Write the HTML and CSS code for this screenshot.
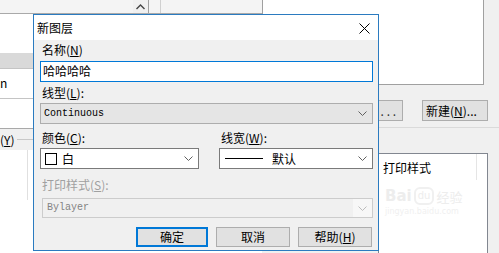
FILE: index.html
```html
<!DOCTYPE html>
<html lang="zh-CN">
<head>
<meta charset="utf-8">
<title>新图层</title>
<link rel="stylesheet" href="styles.css">
</head>
<body>
<div class="backdrop">
  <div class="left-pane">
    <div class="list-head">
      <span class="scroll-up"><svg width="9" height="6" viewBox="0 0 9 6"><path d="M0.5 5L4.5 1L8.5 5" fill="none" stroke="#444" stroke-width="1.4"/></svg></span>
      <span class="col-sep"></span>
    </div>
    <div class="list-body">
      <div class="row-gap"></div>
      <div class="row selected"></div>
      <div class="row item">n</div>
    </div>
    <div class="tab-row"><span class="tab-label">(<u>Y</u>)</span><span class="tab-line"></span></div>
    <div class="lower-list"><span class="lower-sep"></span></div>
  </div>
  <div class="right-pane">
    <div class="top-panel"></div>
    <div class="btn-row">
      <button class="bg-btn dots">. . .</button>
      <button class="bg-btn new">新建(<u>N</u>)...</button>
    </div>
    <div class="separator"></div>
    <div class="style-panel">
      <div class="style-head"><span class="style-title">打印样式</span><span class="head-sep"></span></div>
      <div class="watermark"><span class="wm-bai">Bai</span><span class="wm-paw">du</span><span class="wm-jy">经验</span></div>
      <div class="wm-url">jingyan.baidu.com</div>
    </div>
  </div>
</div>

<div class="dialog">
  <div class="title-bar">
    <span class="title">新图层</span>
    <svg class="close" width="11" height="11" viewBox="0 0 11 11"><path d="M0.5 0.5L10.5 10.5M10.5 0.5L0.5 10.5" stroke="#000" stroke-width="1"/></svg>
  </div>
  <div class="dlg-body">
    <div class="lbl m3">名称(<u>N</u>)</div>
    <div class="input">哈哈哈哈</div>
    <div class="lbl m4">线型(<u>L</u>):</div>
    <div class="combo gray"><span class="mono">Continuous</span><svg class="chev" width="9" height="5" viewBox="0 0 9 5"><path d="M0.5 0.5L4.5 4.5L8.5 0.5" fill="none" stroke="#606060"/></svg></div>
    <div class="pair">
      <div class="col">
        <div class="lbl">颜色(<u>C</u>):</div>
        <div class="combo white"><span class="swatch"></span><span class="val">白</span><svg class="chev" width="9" height="5" viewBox="0 0 9 5"><path d="M0.5 0.5L4.5 4.5L8.5 0.5" fill="none" stroke="#606060"/></svg></div>
      </div>
      <div class="col">
        <div class="lbl">线宽(<u>W</u>):</div>
        <div class="combo white"><span class="lw-line"></span><span class="val">默认</span><svg class="chev" width="9" height="5" viewBox="0 0 9 5"><path d="M0.5 0.5L4.5 4.5L8.5 0.5" fill="none" stroke="#606060"/></svg></div>
      </div>
    </div>
    <div class="lbl disabled m9">打印样式(<u>S</u>):</div>
    <div class="combo off"><span class="mono">Bylayer</span><span class="off-btn"><svg class="chev" width="9" height="5" viewBox="0 0 9 5"><path d="M0.5 0.5L4.5 4.5L8.5 0.5" fill="none" stroke="#bcbcbc"/></svg></span></div>
    <div class="btns">
      <button class="btn default">确定</button>
      <button class="btn">取消</button>
      <button class="btn">帮助(<u>H</u>)</button>
    </div>
  </div>
</div>
</body>
</html>
```

FILE: styles.css
```css
* { box-sizing: border-box; }
html, body {
  margin: 0;
  padding: 0;
}
body {
  width: 499px;
  height: 253px;
  overflow: hidden;
  position: relative;
  background: #f0f0f0;
  font-family: "Noto Sans CJK SC", "Noto Sans", sans-serif;
  font-size: 12px;
  color: #000;
}
u { text-decoration: underline; text-underline-offset: 1px; }

/* ---------- background window ---------- */
.backdrop {
  display: grid;
  grid-template-columns: 262px 237px;
  height: 253px;
}
.left-pane {
  display: flex;
  flex-direction: column;
}
.list-head {
  height: 14px;
  background: #f4f4f4;
  border-bottom: 1px solid #a9a9a9;
  display: flex;
  padding-left: 133px;
}
.scroll-up {
  width: 16px;
  height: 13px;
  background: #f0f0f0;
  border-right: 1px solid #a0a0a0;
  display: flex;
  align-items: center;
  justify-content: center;
}
.col-sep {
  width: 1px;
  height: 13px;
  margin-left: 11px;
  background: #d0d0d0;
}
.list-body {
  height: 115px;
  background: #fff;
  border-bottom: 1px solid #a9a9a9;
  display: flex;
  flex-direction: column;
}
.row-gap { height: 39px; }
.row.selected {
  height: 16px;
  background: #d9d9d9;
  border-bottom: 1px solid #c4c4c4;
}
.row.item {
  height: 30px;
  border-bottom: 1px solid #c4c4c4;
  line-height: 28px;
  padding-left: 0;
}
.tab-row {
  height: 21px;
  display: flex;
  align-items: center;
}
.tab-label { line-height: 14px; }
.tab-line {
  flex: 1;
  height: 1px;
  background: #c8c8c8;
  margin-left: 2px;
}
.lower-list {
  flex: 1;
  background: #fff;
  padding-left: 27px;
}
.lower-sep {
  display: block;
  width: 1px;
  height: 50px;
  background: #e0e0e0;
}

.right-pane {
  display: flex;
  flex-direction: column;
}
.top-panel {
  width: 222px;
  height: 85px;
  background: #fff;
  border-left: 1px solid #a0a0a0;
  border-right: 1px solid #a0a0a0;
  border-bottom: 1px solid #a0a0a0;
}
.btn-row {
  margin-top: 15px;
  height: 21px;
  display: flex;
  justify-content: flex-end;
  gap: 19px;
  padding-right: 11px;
}
.bg-btn {
  height: 21px;
  padding: 0;
  background: #e1e1e1;
  border: 1px solid #adadad;
  font-family: inherit;
  font-size: 12px;
  color: #000;
  line-height: 17px;
}
.bg-btn.dots { width: 73px; text-align: right; padding-right: 6px; color: #333; }
.bg-btn.new { width: 66px; text-align: left; padding-left: 3px; }
.separator {
  margin-top: 6px;
  height: 1px;
  background: #dadada;
}
.style-panel {
  margin-top: 25px;
  margin-left: 116px;
  width: 110px;
  flex: 1;
  background: #fff;
  border: 1px solid #828790;
  border-bottom: none;
}
.style-head {
  height: 27px;
  display: flex;
  align-items: center;
  padding-left: 4px;
}
.style-title { flex: 1; line-height: 14px; }
.head-sep {
  align-self: flex-start;
  width: 1px;
  height: 26px;
  background: #e5e5e5;
  margin-right: 10px;
}
.watermark {
  display: flex;
  align-items: flex-end;
  gap: 2px;
  padding-left: 6px;
  color: #ededed;
  height: 24px;
}
.wm-bai { font-family: "DejaVu Sans", sans-serif; font-weight: bold; font-size: 15px; line-height: 18px; }
.wm-paw { font-family: "DejaVu Sans", sans-serif; font-size: 10px; line-height: 14px; border: 2px solid #f0f0f0; border-radius: 6px; padding: 0 2px; }
.wm-jy { font-size: 13px; line-height: 16px; }
.wm-url {
  padding-left: 6px;
  font-family: "DejaVu Sans", sans-serif;
  font-size: 8px;
  color: #f0f0f0;
  line-height: 14px;
}

/* ---------- dialog ---------- */
.dialog {
  position: absolute;
  left: 33px;
  top: 14px;
  width: 346px;
  height: 237px;
  border: 1px solid #2b7bc0;
  background: #f0f0f0;
  display: flex;
  flex-direction: column;
}
.title-bar {
  height: 25px;
  background: #fff;
  display: flex;
  align-items: center;
  padding-left: 3px;
  padding-right: 8px;
}
.title { flex: 1; line-height: 14px; margin-top: 1px; }
.close { display: block; margin-top: 2px; }

.dlg-body {
  flex: 1;
  padding: 0 5px 0 6px;
  display: flex;
  flex-direction: column;
}
.lbl {
  line-height: 14px;
  height: 14px;
  padding-left: 2px;
  white-space: nowrap;
}
.lbl.m3 { margin-top: 3px; }
.lbl.m4 { margin-top: 4px; }
.lbl.m9 { margin-top: 9px; }
.lbl.disabled { color: #a0a0a0; }

.input {
  margin-top: 4px;
  height: 21px;
  background: #fff;
  border: 1px solid #0078d7;
  padding-left: 2px;
  line-height: 18px;
}
.combo {
  height: 21px;
  display: flex;
  align-items: center;
  border: 1px solid #adadad;
  padding-left: 3px;
  padding-right: 5px;
}
.combo .chev { margin-left: auto; display: block; }
.combo.gray {
  margin-top: 3px;
  background: #e5e5e5;
}
.combo.white {
  margin-top: 3px;
  background: #fff;
  border-color: #7a7a7a;
}
.mono {
  font-family: "Liberation Mono", "DejaVu Sans Mono", monospace;
  font-size: 10px;
  line-height: 12px;
}
.combo.gray .mono { color: #000; }
.pair {
  margin-top: 7px;
  display: grid;
  grid-template-columns: 159px 154px;
  column-gap: 20px;
}
.col { display: flex; flex-direction: column; }
.swatch {
  width: 12px;
  height: 12px;
  border: 1px solid #000;
  background: #fff;
  margin-left: 1px;
  margin-right: 5px;
}
.val { line-height: 14px; }
.lw-line {
  width: 38px;
  height: 1px;
  background: #000;
  margin-left: 2px;
  margin-right: 9px;
}
.combo.off {
  margin-top: 6px;
  margin-left: 2px;
  height: 20px;
  background: #f0f0f0;
  border-color: #cccccc;
  padding-right: 0;
}
.combo.off .mono { color: #838383; padding-left: 1px; }
.off-btn {
  margin-left: auto;
  width: 19px;
  height: 18px;
  background: #f7f7f7;
  display: flex;
  align-items: center;
  justify-content: center;
}
.off-btn .chev { margin-left: 0; }

.btns {
  margin-top: 9px;
  display: flex;
  justify-content: flex-end;
  gap: 8px;
  padding-right: 1px;
}
.btn {
  height: 20px;
  width: 74px;
  padding: 0;
  background: #e1e1e1;
  border: 1px solid #adadad;
  font-family: inherit;
  font-size: 12px;
  color: #000;
  line-height: 16px;
}
.btn.default {
  width: 72px;
  border: 2px solid #0078d7;
  line-height: 14px;
}
```
